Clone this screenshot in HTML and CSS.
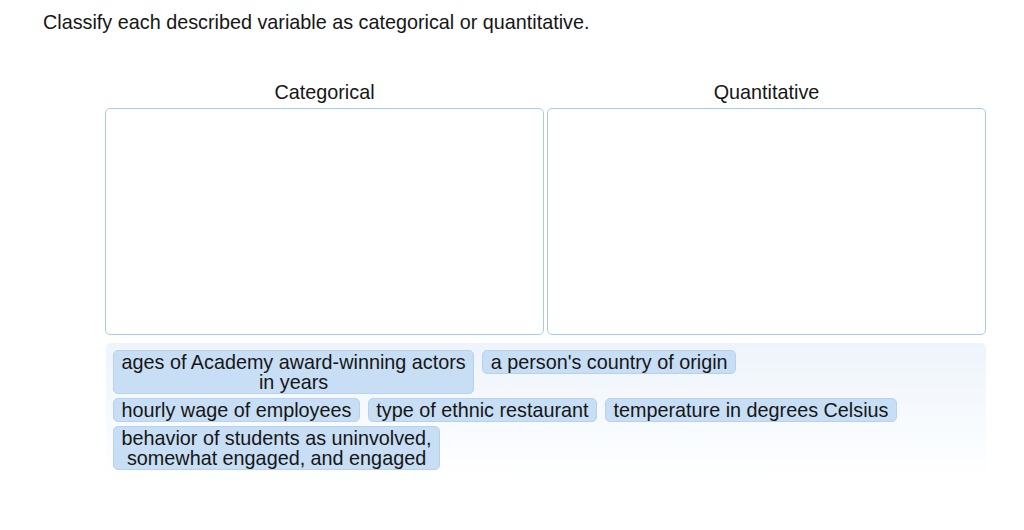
FILE: index.html
```html
<!DOCTYPE html>
<html lang="en">
<head>
    <meta charset="UTF-8">
    <meta name="viewport" content="width=device-width, initial-scale=1.0">
    <title>Classify variables</title>
    <link rel="stylesheet" href="styles.css">
</head>
<body>
    <p class="prompt">Classify each described variable as categorical or quantitative.</p>

    <div class="sorter">
        <div class="bins">
            <div class="bin">
                <div class="bin-label">Categorical</div>
                <div class="bin-drop"></div>
            </div>
            <div class="bin">
                <div class="bin-label">Quantitative</div>
                <div class="bin-drop"></div>
            </div>
        </div>

        <div class="bank">
            <div class="chip">ages of Academy award-winning actors<br>in years</div>
            <div class="chip">a person's country of origin</div>
            <div class="chip">hourly wage of employees</div>
            <div class="chip">type of ethnic restaurant</div>
            <div class="chip">temperature in degrees Celsius</div>
            <div class="chip">behavior of students as uninvolved,<br>somewhat engaged, and engaged</div>
        </div>
    </div>
</body>
</html>
```

FILE: styles.css
```css
* {
    margin: 0;
    padding: 0;
    box-sizing: border-box;
}

body {
    font-family: 'Liberation Sans', Arial, sans-serif;
    color: #161616;
    background: #fff;
}

.prompt {
    font-size: 19.8px;
    padding: 11px 0 0 43px;
    line-height: 22px;
}

.sorter {
    width: 881px;
    margin: 48px 0 0 105px;
}

.bins {
    display: flex;
    gap: 3px;
}

.bin {
    flex: 1;
}

.bin-label {
    text-align: center;
    font-size: 19.8px;
    line-height: 22px;
    height: 27px;
}

.bin-drop {
    height: 227px;
    border: 1px solid #a8cbeb;
    border-radius: 5px;
    background: #fff;
}

.bank {
    margin-top: 8px;
    margin-left: 1px;
    min-height: 125px;
    padding: 7px 7px 10px;
    display: flex;
    flex-wrap: wrap;
    align-items: flex-start;
    gap: 4px 8px;
    border-radius: 5px;
    background: linear-gradient(to bottom, #eef4fb, #fbfdff 80%, #fff);
}

.chip {
    font-size: 19.8px;
    line-height: 20px;
    padding: 1px 7.5px 1px;
    text-align: center;
    background: #c7def4;
    border: 1px solid #b7d2ee;
    border-radius: 5px;
    color: #161616;
}
```
